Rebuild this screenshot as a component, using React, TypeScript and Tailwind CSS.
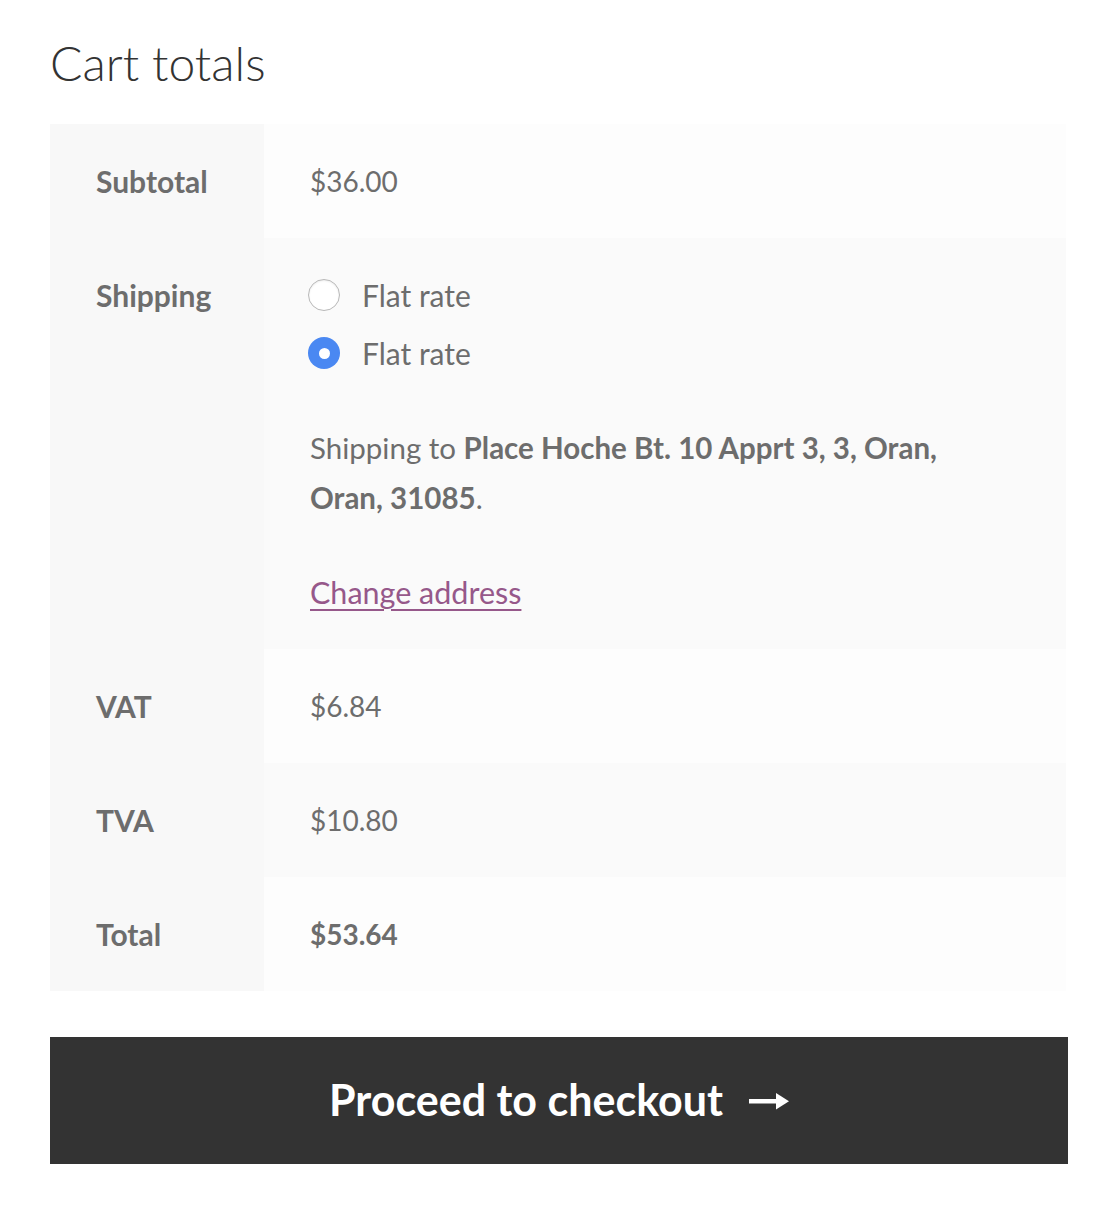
const rows = [
  { label: "VAT", value: "$6.84" },
  { label: "TVA", value: "$10.80" },
];

const th = "w-[214px] bg-[#f8f8f8] px-[46px] py-[32px] text-left align-top text-[30px] font-bold";

function Radio({ checked }: { checked?: boolean }) {
  if (checked) {
    return (
      <span className="flex h-[32px] w-[32px] shrink-0 items-center justify-center rounded-full bg-[#4a88f2]">
        <span className="h-[11px] w-[11px] rounded-full bg-white" />
      </span>
    );
  }
  return <span className="h-[32px] w-[32px] shrink-0 rounded-full border border-[#b8b8b8] bg-white shadow-[inset_0_1px_2px_rgba(0,0,0,0.08)]" />;
}

export default function App() {
  return (
    <div className="min-h-screen bg-white px-[50px] pt-[34px] text-[#6d6d6d]" style={{ fontFamily: "Lato, 'Liberation Sans', sans-serif" }}>
      <h2 className="mb-[32px] text-[48px] font-light leading-[58px] text-[#333333]">Cart totals</h2>
      <table className="w-[1016px] border-collapse text-[28px] leading-[50px]">
        <tbody>
          <tr>
            <th className={th}>Subtotal</th>
            <td className="bg-[#fdfdfd] px-[46px] py-[32px] align-top">$36.00</td>
          </tr>
          <tr>
            <th className={th}>Shipping</th>
            <td className="bg-[#fafafa] px-[46px] py-[32px] align-top">
              <ul className="-ml-[2px] flex flex-col gap-[8px] text-[30px]">
                <li className="flex items-center gap-[22px]">
                  <Radio />
                  <span>Flat rate</span>
                </li>
                <li className="flex items-center gap-[22px]">
                  <Radio checked />
                  <span>Flat rate</span>
                </li>
              </ul>
              <p className="mt-[45px] max-w-[670px] text-[29.5px]">
                Shipping to <strong className="font-bold">Place Hoche Bt. 10 Apprt 3, 3, Oran, Oran, 31085</strong>.
              </p>
              <a href="#" className="mt-[44px] block w-fit text-[30.5px] text-[#96588a] underline underline-offset-[5px] decoration-[2px]">Change address</a>
            </td>
          </tr>
          {rows.map((r, i) => (
            <tr key={r.label}>
              <th className={th}>{r.label}</th>
              <td className={i % 2 === 0 ? "bg-[#fdfdfd] px-[46px] py-[32px] align-top" : "bg-[#fafafa] px-[46px] py-[32px] align-top"}>{r.value}</td>
            </tr>
          ))}
          <tr>
            <th className={th}>Total</th>
            <td className="bg-[#fdfdfd] px-[46px] py-[32px] align-top font-bold">$53.64</td>
          </tr>
        </tbody>
      </table>
      <a href="#" className="mt-[46px] flex h-[127px] w-[1018px] items-center justify-center gap-[26px] bg-[#333333] text-[43px] font-bold text-white">
        <span>Proceed to checkout</span>
        <svg width="40" height="20" viewBox="0 0 40 20" fill="white">
          <rect x="0" y="8" width="30" height="4.5" />
          <path d="M27 2 L40 10.25 L27 18.5 Z" />
        </svg>
      </a>
    </div>
  );
}
